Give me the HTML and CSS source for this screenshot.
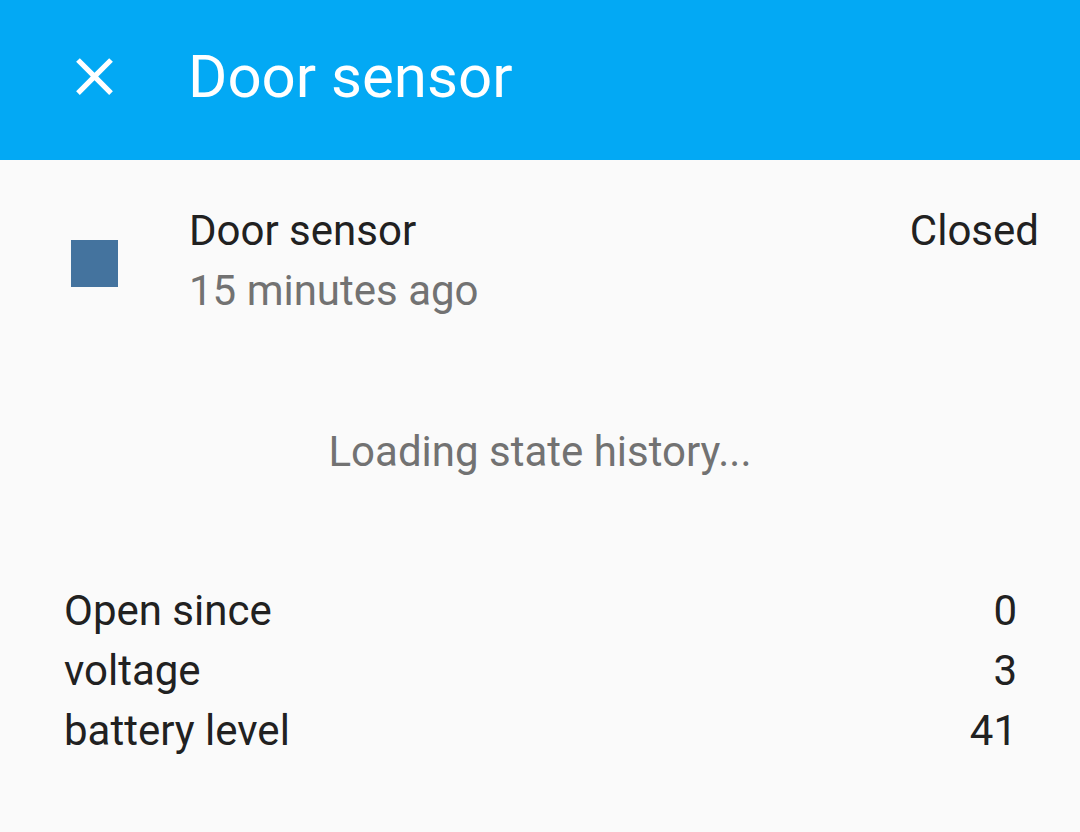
FILE: index.html
```html
<!DOCTYPE html>
<html lang="en">
<head>
    <meta charset="UTF-8">
    <meta name="viewport" content="width=device-width, initial-scale=1.0">
    <title>Door sensor</title>
    <link rel="stylesheet" href="styles.css">
</head>
<body>
    <header class="toolbar">
        <button class="close-btn" aria-label="Close">
            <svg viewBox="0 0 24 24" width="63" height="63">
                <path d="M19 6.41L17.59 5 12 10.59 6.41 5 5 6.41 10.59 12 5 17.59 6.41 19 12 13.41 17.59 19 19 17.59 13.41 12z"/>
            </svg>
        </button>
        <h1 class="toolbar-title">Door sensor</h1>
    </header>

    <div class="entity-row">
        <div class="state-icon"><span class="square"></span></div>
        <div class="info">
            <div class="name">Door sensor</div>
            <div class="time">15 minutes ago</div>
        </div>
        <div class="state">Closed</div>
    </div>

    <div class="history">Loading state history...</div>

    <div class="attributes">
        <div class="attr-row"><span>Open since</span><span>0</span></div>
        <div class="attr-row"><span>voltage</span><span>3</span></div>
        <div class="attr-row"><span>battery level</span><span>41</span></div>
    </div>
</body>
</html>
```

FILE: styles.css
```css
body {
    margin: 0;
    background: #fafafa;
    font-family: Roboto, "Noto Sans", sans-serif;
    color: #212121;
}
.toolbar {
    height: 160px;
    background: #03a9f4;
    display: flex;
    align-items: center;
    padding-left: 63px;
    color: white;
}
.close-btn {
    border: none;
    background: none;
    padding: 0;
    width: 63px;
    height: 63px;
    fill: white;
    margin-top: -8px;
}
.close-btn svg {
    display: block;
}
.toolbar-title {
    margin: -8px 0 0 62px;
    font-size: 60px;
    font-weight: 400;
}
.entity-row {
    display: flex;
    align-items: flex-start;
    padding: 41px 41px 0 64px;
    font-size: 42px;
    line-height: 60px;
}
.state-icon {
    width: 61px;
    height: 124px;
    display: flex;
    align-items: center;
    justify-content: center;
    margin-right: 64px;
}
.square {
    width: 47px;
    height: 47px;
    background: #44739e;
}
.info {
    flex: 1;
}
.time {
    color: #727272;
}
.history {
    text-align: center;
    color: #727272;
    font-size: 42px;
    line-height: 60px;
    margin-top: 97px;
}
.attributes {
    padding: 99px 63px 0 64px;
    font-size: 42px;
    line-height: 60px;
}
.attr-row {
    display: flex;
    justify-content: space-between;
}
```
